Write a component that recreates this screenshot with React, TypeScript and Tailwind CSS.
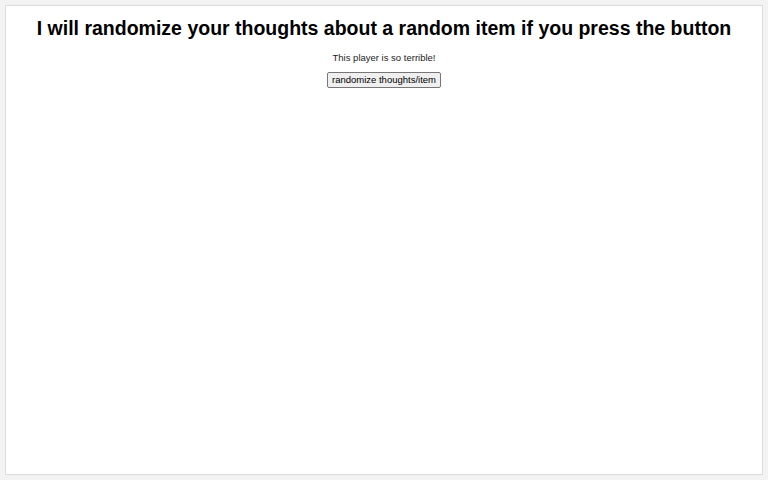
import React, { useState } from 'react';

const thoughts = ['This player is so terrible!'];

export default function App() {
  const [thought] = useState(thoughts[0]);

  return (
    <div className="h-[480px] bg-[#f3f3f3] p-[5px] font-['Liberation_Sans',Arial,sans-serif]">
      <div className="h-full border border-[#dcdcdc] bg-white text-center text-black">
        <h1 className="mt-[10px] text-[19.5px] font-bold leading-[24px]">
          I will randomize your thoughts about a random item if you press the button
        </h1>
        <p className="mt-[12px] text-[9.5px] leading-[12px] text-[#222]">{thought}</p>
        <button className="mt-[8px] h-[16px] rounded-[2px] border border-[#767676] bg-[#efefef] px-[4px] text-[9.5px] leading-[12px]">
          randomize thoughts/item
        </button>
      </div>
    </div>
  );
}
